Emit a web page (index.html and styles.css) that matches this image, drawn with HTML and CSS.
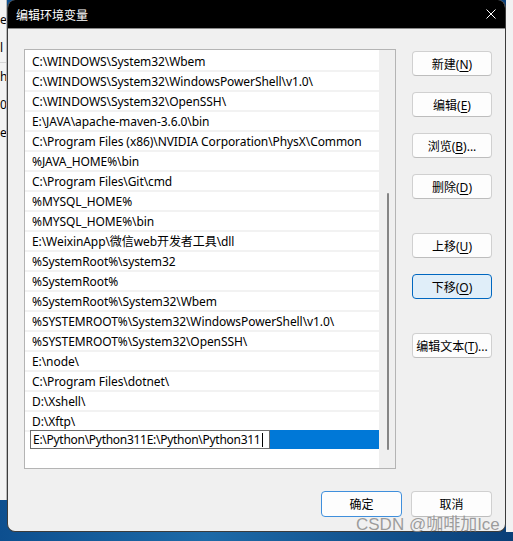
FILE: index.html
```html
<!DOCTYPE html>
<html lang="zh-CN">
<head>
    <meta charset="UTF-8">
    <title>编辑环境变量</title>
    <link rel="stylesheet" href="styles.css">
</head>
<body>
    <div class="desktop">
        <div class="backapp">
            <div class="back-line">e</div>
            <div class="back-line">l</div>
            <div class="back-line sep">h</div>
            <div class="back-line">0</div>
            <div class="back-line">e</div>
        </div>

        <div class="dialog">
            <div class="titlebar">
                <span class="title">编辑环境变量</span>
                <svg class="close" width="10" height="10" viewBox="0 0 10 10">
                    <path d="M0.5 0.5 L9.5 9.5 M9.5 0.5 L0.5 9.5" stroke="#fff" stroke-width="1"/>
                </svg>
            </div>

            <div class="content">
                <div class="main">
                    <div class="pathlist">
                        <ul class="rows">
                            <li>C:\WINDOWS\System32\Wbem</li>
                            <li>C:\WINDOWS\System32\WindowsPowerShell\v1.0\</li>
                            <li>C:\WINDOWS\System32\OpenSSH\</li>
                            <li>E:\JAVA\apache-maven-3.6.0\bin</li>
                            <li>C:\Program Files (x86)\NVIDIA Corporation\PhysX\Common</li>
                            <li>%JAVA_HOME%\bin</li>
                            <li>C:\Program Files\Git\cmd</li>
                            <li>%MYSQL_HOME%</li>
                            <li>%MYSQL_HOME%\bin</li>
                            <li>E:\WeixinApp\微信web开发者工具\dll</li>
                            <li>%SystemRoot%\system32</li>
                            <li>%SystemRoot%</li>
                            <li>%SystemRoot%\System32\Wbem</li>
                            <li>%SYSTEMROOT%\System32\WindowsPowerShell\v1.0\</li>
                            <li>%SYSTEMROOT%\System32\OpenSSH\</li>
                            <li>E:\node\</li>
                            <li>C:\Program Files\dotnet\</li>
                            <li>D:\Xshell\</li>
                            <li>D:\Xftp\</li>
                            <li class="editing">
                                <div class="edit-box">E:\Python\Python311E:\Python\Python311<span class="caret"></span></div>
                                <div class="selected-fill"></div>
                            </li>
                        </ul>
                        <div class="scrollbar"><div class="thumb"></div></div>
                    </div>

                    <div class="side">
                        <div class="group">
                            <button class="btn">新建(<u>N</u>)</button>
                            <button class="btn">编辑(<u>E</u>)</button>
                            <button class="btn">浏览(<u>B</u>)...</button>
                            <button class="btn">删除(<u>D</u>)</button>
                        </div>
                        <div class="group">
                            <button class="btn">上移(<u>U</u>)</button>
                            <button class="btn focused">下移(<u>O</u>)</button>
                        </div>
                        <div class="group">
                            <button class="btn">编辑文本(<u>T</u>)...</button>
                        </div>
                    </div>
                </div>

                <div class="footer">
                    <button class="btn wide default">确定</button>
                    <button class="btn wide">取消</button>
                </div>
            </div>
        </div>

        <div class="backright"></div>

        <div class="watermark">CSDN @咖啡加Ice</div>
    </div>
</body>
</html>
```

FILE: styles.css
```css
body {
    margin: 0;
    font-family: "Noto Sans", "Noto Sans CJK SC", sans-serif;
    font-size: 12px;
    color: #000;
}
.desktop {
    position: relative;
    width: 513px;
    height: 541px;
    overflow: hidden;
    display: flex;
    align-items: flex-start;
    background: linear-gradient(90deg, #0d4f8f, #1d6aa8 40%, #0b3f78); /* wallpaper */
}

/* window behind the dialog, only a sliver shows */
.backapp {
    width: 7px;
    height: 500px;
    background-color: #f3f3f3;
    border-right: 1px solid #b9b9b9;
    box-sizing: border-box;
    overflow: hidden;
    padding-top: 6px;
}
.back-line {
    height: 28px;
    line-height: 28px;
    font-size: 12px;
    white-space: nowrap;
}
.back-line.sep {
    border-top: 1px solid #d6d6d6;
}

.dialog {
    width: 499px;
    height: 532px;
    box-sizing: border-box;
    border: 1px solid #3c3c3c;
    border-top: none;
    border-radius: 8px;
    background-color: #f0f0f0;
    overflow: hidden;
    flex-shrink: 0;
}
.titlebar {
    height: 29px;
    background-color: #000;
    display: flex;
    align-items: center;
    justify-content: space-between;
    padding: 0 9px 0 8px;
    border-bottom: 1px solid #8a8a8a;
    box-sizing: border-box;
}
.title {
    color: #fff;
    font-size: 12px;
    font-family: "Noto Sans CJK SC", sans-serif;
}
.content {
    padding: 20px 13px 14px 16px;
}
.main {
    display: flex;
    gap: 16px;
}

.pathlist {
    width: 372px;
    height: 420px;
    box-sizing: border-box;
    border: 1px solid #b4b4b4;
    background-color: #fff;
    display: flex;
}
.rows {
    list-style: none;
    margin: 0;
    padding: 2px 0 0 0;
    flex: 1;
    letter-spacing: -0.08px;
}
.rows li {
    height: 20px;
    line-height: 19px;
    padding-left: 7px;
    border-bottom: 2px solid #f2f2f2;
    box-sizing: border-box;
    white-space: nowrap;
    overflow: hidden;
}
.rows li.editing {
    display: flex;
    padding-left: 5px;
    border-bottom: none;
    margin-top: -2px;
}
.edit-box {
    width: 240px;
    height: 19px;
    box-sizing: border-box;
    border: 1px solid #6e6e6e;
    background-color: #fff;
    padding-left: 2px;
    line-height: 17px;
    letter-spacing: -0.28px;
    display: flex;
    align-items: center;
}
.caret {
    width: 1px;
    height: 14px;
    background-color: #000;
    margin-left: 2px;
}
.selected-fill {
    flex: 1;
    height: 19px;
    background-color: #0078d7;
}
.scrollbar {
    width: 16px;
    background-color: #efefef;
    display: flex;
    justify-content: center;
    padding-top: 143px;
    box-sizing: border-box;
}
.thumb {
    width: 2px;
    height: 257px;
    background-color: #858585;
    border-radius: 1px;
    margin-left: 1px;
}

.side {
    width: 80px;
    padding-top: 2px;
    display: flex;
    flex-direction: column;
    gap: 34px;
}
.group {
    display: flex;
    flex-direction: column;
    gap: 16px;
}
.btn {
    height: 25px;
    padding: 0;
    border: 1px solid #d0d0d0;
    border-bottom-color: #bdbdbd;
    border-radius: 4px;
    background-color: #fdfdfd;
    font-family: "Noto Sans", "Noto Sans CJK SC", sans-serif;
    font-size: 12px;
    color: #000;
    cursor: pointer;
}
.btn u {
    text-underline-offset: 2px;
}
.btn.focused {
    background-color: #e0eef9;
    border-color: #0067c0;
}

.footer {
    margin-top: 22px;
    display: flex;
    justify-content: flex-end;
    gap: 9px;
}
.btn.wide {
    width: 81px;
    height: 26px;
}
.btn.default {
    border-color: #3f8fdc;
}

.backright {
    width: 7px;
    height: 532px;
    background-color: #f2f2f2;
}

.watermark {
    position: absolute;
    left: 356px;
    top: 510px;
    font-family: "Liberation Sans", "Noto Sans CJK SC", sans-serif;
    font-size: 17px;
    color: rgba(140, 140, 140, 0.85);
    white-space: nowrap;
}
```
